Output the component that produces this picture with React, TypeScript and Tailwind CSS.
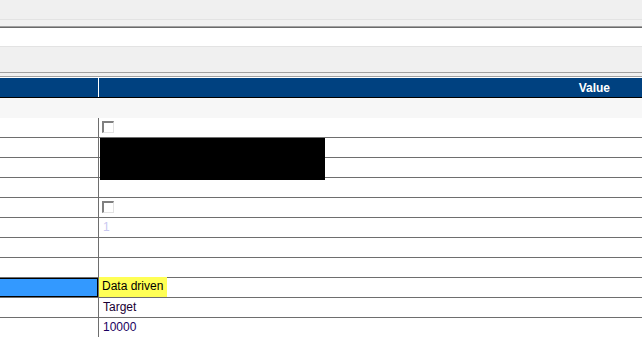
import React from "react";

type Row = {
  value?: React.ReactNode;
  selected?: boolean;
};

function Check() {
  return (
    <span className="mt-[3px] ml-[3px] block h-[12px] w-[12px] self-start border-t-2 border-l-2 border-t-[#808080] border-l-[#808080] border-r border-b border-r-[#e3e3e3] border-b-[#e3e3e3] bg-white" />
  );
}

const rows: Row[] = [
  { value: <Check /> },
  {},
  {},
  {},
  { value: <Check /> },
  { value: <span className="pl-[4px] text-[#c8c8f0]">1</span> },
  {},
  {},
  {
    selected: true,
    value: (
      <span className="flex h-[20px] w-[68px] items-center bg-[#ffff55] pb-[2px] pl-[3px] text-black">
        Data driven
      </span>
    ),
  },
  { value: <span className="pl-[4px] text-[#1a0033]">Target</span> },
  { value: <span className="pl-[4px] text-[#1a0060]">10000</span> },
];

export default function App() {
  return (
    <div
      className="relative h-[337px] w-[642px] overflow-hidden bg-white text-[12px]"
      style={{ fontFamily: '"Liberation Sans", Arial, sans-serif' }}
    >
      {/* toolbar strip */}
      <div className="h-[19px] bg-[#f0f0f0]" />
      <div className="h-px bg-[#e3e3e3]" />
      <div className="h-[6px] bg-[#f0f0f0]" />
      <div className="h-px bg-[#a0a0a0]" />
      <div className="h-px bg-[#696969]" />
      <div className="h-[18px] bg-white" />
      <div className="h-px bg-[#e3e3e3]" />
      <div className="h-[25px] bg-[#f0f0f0]" />
      <div className="h-px bg-[#a0a0a0]" />
      <div className="h-[3px] bg-[#f0f0f0]" />
      <div className="h-px bg-[#a0a0a0]" />
      <div className="h-px bg-white" />

      {/* grid header */}
      <div className="flex h-[19px] bg-[#004180]">
        <div className="w-[98px]" />
        <div className="w-px bg-white" />
        <div className="flex flex-1 items-center justify-end pr-[32px] font-bold text-white">
          Value
        </div>
      </div>
      <div className="h-px bg-black" />
      <div className="h-[20px] bg-[#f7f7f7]" />

      {rows.map((r, i) => (
        <div key={i} className="flex h-[20px] border-b border-[#6e6e6e]">
          <div
            className={
              r.selected
                ? "w-[98px] border border-l-0 border-black bg-[#3399ff]"
                : "w-[98px]"
            }
          />
          <div className="w-px bg-[#6e6e6e]" />
          <div className="flex flex-1 items-center pb-[2px]">{r.value}</div>
        </div>
      ))}

      {/* redacted block */}
      <div className="absolute top-[138px] left-[100px] h-[42px] w-[225px] bg-black" />
    </div>
  );
}
